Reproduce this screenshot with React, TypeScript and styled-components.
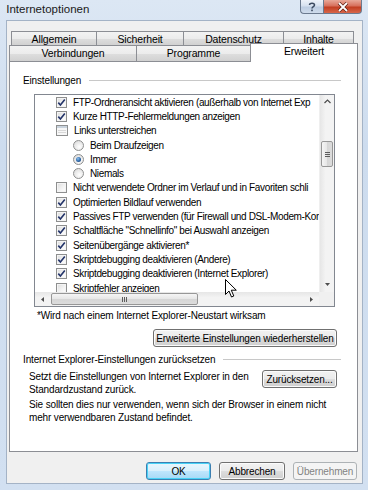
import React from "react";
import styled, { createGlobalStyle, css } from "styled-components";

const GlobalStyle = createGlobalStyle`
  html, body { margin: 0; padding: 0; background: #cfdef0; }
  body {
    font-family: "Liberation Sans", Arial, sans-serif;
    font-size: 10px;
    letter-spacing: -0.15px;
    color: #000;
  }
`;

type Item =
  | { kind: "check"; label: string; checked: boolean }
  | { kind: "group"; label: string }
  | { kind: "radio"; label: string; checked: boolean };

// labels as far as the list box shows them (it is scrolled sideways)
const items: Item[] = [
  { kind: "check", label: "FTP-Ordneransicht aktivieren (außerhalb von Internet Exp", checked: true },
  { kind: "check", label: "Kurze HTTP-Fehlermeldungen anzeigen", checked: true },
  { kind: "group", label: "Links unterstreichen" },
  { kind: "radio", label: "Beim Draufzeigen", checked: false },
  { kind: "radio", label: "Immer", checked: true },
  { kind: "radio", label: "Niemals", checked: false },
  { kind: "check", label: "Nicht verwendete Ordner im Verlauf und in Favoriten schli", checked: false },
  { kind: "check", label: "Optimierten Bildlauf verwenden", checked: true },
  { kind: "check", label: "Passives FTP verwenden (für Firewall und DSL-Modem-Kor", checked: true },
  { kind: "check", label: "Schaltfläche \"Schnellinfo\" bei Auswahl anzeigen", checked: true },
  { kind: "check", label: "Seitenübergänge aktivieren*", checked: true },
  { kind: "check", label: "Skriptdebugging deaktivieren (Andere)", checked: true },
  { kind: "check", label: "Skriptdebugging deaktivieren (Internet Explorer)", checked: true },
  { kind: "check", label: "Skriptfehler anzeigen", checked: false },
];

const Window = styled.div`
  position: relative;
  width: 368px;
  height: 490px;
  box-sizing: border-box;
  display: flex;
  flex-direction: column;
  padding: 0 5px 6px 6px;
  background: linear-gradient(180deg, #dce7f4 0%, #cddcee 30%, #d2e0f1 100%);
  overflow: hidden;
`;

const TitleBar = styled.div`
  height: 20px;
  display: flex;
  align-items: flex-start;
  margin-left: -3px;
`;

const Title = styled.div`
  font-size: 11.5px;
  letter-spacing: 0;
  color: #1a1a1a;
  line-height: 18px;
  flex: 1;
`;

const Caption = styled.div`
  display: flex;
  margin-right: 1px;
`;

const CaptionButton = styled.div<{ $close?: boolean }>`
  height: 14px;
  box-sizing: border-box;
  display: flex;
  align-items: center;
  justify-content: center;
  border: 1px solid #6b7a8f;
  border-top: none;
  ${(p) =>
    p.$close
      ? css`
          width: 39px;
          border-radius: 0 0 4px 0;
          background: linear-gradient(180deg, #e8a899 0%, #d7705c 45%, #c23e22 55%, #d8664a 100%);
        `
      : css`
          width: 23px;
          border-right: none;
          border-radius: 0 0 0 4px;
          background: linear-gradient(180deg, #edf2f9 0%, #d6e1ef 45%, #bdcde2 55%, #cfdcec 100%);
        `}
`;

const Body = styled.div`
  flex: 1;
  display: flex;
  flex-direction: column;
  background: #f0f0f0;
  border: 1px solid #a4b3c6;
  padding: 10px 4px 0 2px;
`;

const TabStrip = styled.div`
  display: flex;
  flex-direction: column;
`;

const TabRow = styled.div<{ $indent: number }>`
  display: flex;
  align-items: flex-start;
  padding-left: ${(p) => p.$indent}px;
  margin-bottom: -1px;
`;

const Tab = styled.div<{ $w: number; $h: number; $selected?: boolean }>`
  width: ${(p) => p.$w}px;
  height: ${(p) => p.$h}px;
  box-sizing: border-box;
  border: 1px solid #8c8e94;
  border-bottom: none;
  margin-right: -1px;
  text-align: center;
  font-size: 10.5px;
  line-height: 14px;
  background: linear-gradient(180deg, #f3f3f3 0%, #ebebeb 50%, #dddddd 51%, #cfcfcf 100%);
  ${(p) =>
    p.$selected &&
    css`
      position: relative;
      z-index: 1;
      margin-top: -2px;
      margin-right: 0;
      line-height: 15px;
      background: #fff;
    `}
`;

const TabPanel = styled.div`
  height: 391px;
  box-sizing: border-box;
  background: #fff;
  border: 1px solid #8c8e94;
  padding: 12px 16px 0 13px;
  display: flex;
  flex-direction: column;
`;

const GroupHeader = styled.div`
  display: flex;
  align-items: center;
  gap: 8px;
  line-height: 14px;
  &::after {
    content: "";
    flex: 1;
    height: 1px;
    background: #c8c8c8;
    border-bottom: 1px solid #fff;
  }
`;

const ListBox = styled.div`
  margin: 6px 6px 0 11px;
  height: 213px;
  box-sizing: border-box;
  border: 1px solid #828790;
  display: grid;
  grid-template-columns: 1fr 15px;
  grid-template-rows: 1fr 14px;
`;

const ListItems = styled.div`
  overflow: hidden;
  padding-left: 21px;
  letter-spacing: -0.36px;
`;

const Row = styled.div<{ $indent?: boolean }>`
  height: 14.3px;
  display: flex;
  align-items: center;
  gap: 6px;
  white-space: nowrap;
  padding-left: ${(p) => (p.$indent ? 17 : 0)}px;
`;

const Box = styled.span`
  width: 11px;
  height: 11px;
  flex: none;
  box-sizing: border-box;
  border: 1px solid #8e8f8f;
  background: linear-gradient(135deg, #dcdcdc 0%, #f4f4f4 60%, #ffffff 100%);
  box-shadow: inset 0 0 0 1px #f4f4f4;
  display: flex;
  align-items: center;
  justify-content: center;
`;

const Radio = styled.span<{ $on: boolean }>`
  width: 11px;
  height: 11px;
  flex: none;
  box-sizing: border-box;
  border-radius: 50%;
  border: 1px solid #8e8f8f;
  background: radial-gradient(circle at 60% 65%, #ffffff 0%, #e2e2e2 70%, #cfcfcf 100%);
  display: flex;
  align-items: center;
  justify-content: center;
  &::after {
    content: "";
    display: ${(p) => (p.$on ? "block" : "none")};
    width: 5px;
    height: 5px;
    border-radius: 50%;
    background: radial-gradient(circle at 40% 35%, #8fc2ef 0%, #2b66a8 55%, #0d2f5e 100%);
  }
`;

const VScroll = styled.div`
  display: flex;
  flex-direction: column;
  background: linear-gradient(90deg, #e6e6e6 0%, #f3f3f3 40%, #f3f3f3 100%);
  border-left: 1px solid #efefef;
`;

const HScroll = styled.div`
  display: flex;
  align-items: stretch;
  background: linear-gradient(180deg, #e6e6e6 0%, #f3f3f3 40%, #f3f3f3 100%);
`;

const Corner = styled.div`
  background: #f0f0f0;
`;

const Arrow = styled.div<{ $size: number }>`
  flex: none;
  width: ${(p) => p.$size}px;
  height: ${(p) => p.$size}px;
  display: flex;
  align-items: center;
  justify-content: center;
`;

const Track = styled.div`
  flex: 1;
  display: flex;
  flex-direction: column;
`;

const HTrack = styled.div`
  flex: 1;
  display: flex;
  padding: 1px 0;
`;

const Thumb = styled.div<{ $vertical?: boolean }>`
  box-sizing: border-box;
  border: 1px solid #979797;
  border-radius: 2px;
  display: flex;
  align-items: center;
  justify-content: center;
  ${(p) =>
    p.$vertical
      ? css`
          margin: 31px 1px 0 1px;
          height: 26px;
          background: linear-gradient(90deg, #f5f5f5 0%, #e6e6e6 50%, #d6d6d6 51%, #dcdcdc 100%);
        `
      : css`
          margin-left: 1px;
          width: 147px;
          background: linear-gradient(180deg, #f5f5f5 0%, #e6e6e6 50%, #d6d6d6 51%, #dcdcdc 100%);
        `}
`;

const Note = styled.div`
  margin: 2px 0 0 14px;
  line-height: 14px;
`;

const PushButton = styled.div<{ $w: number; $default?: boolean; $disabled?: boolean }>`
  width: ${(p) => p.$w}px;
  height: 18px;
  box-sizing: border-box;
  border: 1px solid #707070;
  border-radius: 3px;
  display: flex;
  align-items: center;
  justify-content: center;
  background: linear-gradient(180deg, #f2f2f2 0%, #ebebeb 48%, #dddddd 52%, #cfcfcf 100%);
  box-shadow: inset 0 0 0 1px #fbfbfb;
  white-space: nowrap;
  ${(p) =>
    p.$default &&
    css`
      border-color: #3c7fb1;
      box-shadow: inset 0 0 0 1px #48d2f6;
      background: linear-gradient(180deg, #eaf6fd 0%, #d9f0fc 48%, #bee6fd 52%, #a7d9f5 100%);
    `}
  ${(p) =>
    p.$disabled &&
    css`
      border-color: #adb2b5;
      background: #f4f4f4;
      box-shadow: none;
      color: #838383;
    `}
`;

const RightAligned = styled.div<{ $top: number }>`
  display: flex;
  justify-content: flex-end;
  margin: ${(p) => p.$top}px 4px 0 0;
`;

const SectionHeader = styled(GroupHeader)`
  margin-top: 6px;
`;

const ResetRow = styled.div`
  display: flex;
  justify-content: space-between;
  align-items: flex-start;
  margin: 3px 4px 0 6px;
`;

const Para = styled.div<{ $top?: number }>`
  line-height: 12.5px;
  margin-top: ${(p) => p.$top ?? 0}px;
`;

const ParaBlock = styled.div`
  line-height: 13px;
  margin: 2px 0 0 6px;
`;

const Footer = styled.div`
  display: flex;
  justify-content: flex-end;
  gap: 8px;
  padding: 10px 1px 0 0;
`;

const Cursor = styled.svg`
  position: absolute;
  left: 225px;
  top: 279px;
`;

function Check() {
  return (
    <svg width="9" height="9" viewBox="0 0 9 9">
      <path d="M1.3 4.6 L3.4 7 L7.8 1.4" fill="none" stroke="#23346a" strokeWidth="1.6" />
    </svg>
  );
}

function GroupIcon() {
  return (
    <svg width="12" height="11" viewBox="0 0 12 11" style={{ flex: "none" }}>
      <rect x="0.5" y="0.5" width="11" height="10" fill="#f7f7f7" stroke="#8e8f8f" />
      <rect x="1" y="1" width="10" height="2" fill="#c9d3dd" />
      <line x1="2" y1="5.5" x2="10" y2="5.5" stroke="#d8d8d8" />
      <line x1="2" y1="7.5" x2="10" y2="7.5" stroke="#d8d8d8" />
    </svg>
  );
}

function Tri({ dir }: { dir: "up" | "down" | "left" | "right" }) {
  const d = {
    up: "M1.5 5 L4.5 2 L7.5 5",
    down: "M2 3 L7 3 L4.5 6 Z",
    left: "M6 2 L6 7 L3 4.5 Z",
    right: "M3 2 L3 7 L6 4.5 Z",
  }[dir];
  return (
    <svg width="9" height="9" viewBox="0 0 9 9">
      {dir === "up" ? (
        <path d={d} fill="none" stroke="#4d4d4d" strokeWidth="1.2" />
      ) : (
        <path d={d} fill="#4d4d4d" />
      )}
    </svg>
  );
}

function Grip({ vertical }: { vertical?: boolean }) {
  return vertical ? (
    <svg width="7" height="7" viewBox="0 0 7 7">
      <path d="M1 1.5h5M1 3.5h5M1 5.5h5" stroke="#5d5d5d" />
    </svg>
  ) : (
    <svg width="7" height="7" viewBox="0 0 7 7">
      <path d="M1.5 1v5M3.5 1v5M5.5 1v5" stroke="#5d5d5d" />
    </svg>
  );
}

export default function App() {
  return (
    <>
      <GlobalStyle />
      <Window>
        <TitleBar>
          <Title>&nbsp;Internetoptionen</Title>
          <Caption>
            <CaptionButton>
              <svg width="8" height="10" viewBox="0 0 8 10">
                <path d="M1.5 3 C1.5 0.6 6.5 0.6 6.5 3 C6.5 4.6 4 4.6 4 6.5" fill="none" stroke="#3b4a60" strokeWidth="1.5" />
                <rect x="3.2" y="7.6" width="1.6" height="1.6" fill="#3b4a60" />
              </svg>
            </CaptionButton>
            <CaptionButton $close>
              <svg width="12" height="10" viewBox="0 0 12 10">
                <path d="M2 1 L10 9 M10 1 L2 9" stroke="#5a1b10" strokeWidth="3.2" />
                <path d="M2 1 L10 9 M10 1 L2 9" stroke="#fff" strokeWidth="1.8" />
              </svg>
            </CaptionButton>
          </Caption>
        </TitleBar>
        <Body>
          <TabStrip>
            <TabRow $indent={2}>
              <Tab $w={86} $h={15}>Allgemein</Tab>
              <Tab $w={88} $h={15}>Sicherheit</Tab>
              <Tab $w={101} $h={15}>Datenschutz</Tab>
              <Tab $w={71} $h={15}>Inhalte</Tab>
            </TabRow>
            <TabRow $indent={0}>
              <Tab $w={128} $h={17}>Verbindungen</Tab>
              <Tab $w={115} $h={17}>Programme</Tab>
              <Tab $w={108} $h={19} $selected>
                Erweitert
              </Tab>
            </TabRow>
          </TabStrip>
          <TabPanel>
            <GroupHeader>Einstellungen</GroupHeader>
            <ListBox>
              <ListItems>
                {items.map((it, i) =>
                  it.kind === "check" ? (
                    <Row key={i}>
                      <Box>{it.checked && <Check />}</Box>
                      {it.label}
                    </Row>
                  ) : it.kind === "radio" ? (
                    <Row key={i} $indent>
                      <Radio $on={it.checked} />
                      {it.label}
                    </Row>
                  ) : (
                    <Row key={i}>
                      <GroupIcon />
                      {it.label}
                    </Row>
                  )
                )}
              </ListItems>
              <VScroll>
                <Arrow $size={15}>
                  <Tri dir="up" />
                </Arrow>
                <Track>
                  <Thumb $vertical>
                    <Grip vertical />
                  </Thumb>
                </Track>
                <Arrow $size={15}>
                  <Tri dir="down" />
                </Arrow>
              </VScroll>
              <HScroll>
                <Arrow $size={15}>
                  <Tri dir="left" />
                </Arrow>
                <HTrack>
                  <Thumb>
                    <Grip />
                  </Thumb>
                </HTrack>
                <Arrow $size={15}>
                  <Tri dir="right" />
                </Arrow>
              </HScroll>
              <Corner />
            </ListBox>
            <Note>*Wird nach einem Internet Explorer-Neustart wirksam</Note>
            <RightAligned $top={6}>
              <PushButton $w={184}>Erweiterte Einstellungen wiederherstellen</PushButton>
            </RightAligned>
            <SectionHeader>Internet Explorer-Einstellungen zurücksetzen</SectionHeader>
            <ResetRow>
              <Para $top={1}>
                Setzt die Einstellungen von Internet Explorer in den
                <br />
                Standardzustand zurück.
              </Para>
              <PushButton $w={75}>Zurücksetzen...</PushButton>
            </ResetRow>
            <ParaBlock>
              Sie sollten dies nur verwenden, wenn sich der Browser in einem nicht
              <br />
              mehr verwendbaren Zustand befindet.
            </ParaBlock>
          </TabPanel>
          <Footer>
            <PushButton $w={65} $default>
              OK
            </PushButton>
            <PushButton $w={66}>Abbrechen</PushButton>
            <PushButton $w={64} $disabled>
              Übernehmen
            </PushButton>
          </Footer>
        </Body>
        <Cursor width="13" height="19" viewBox="0 0 13 19">
          <path d="M0.5 0.5 L0.5 15.5 L4 12 L6.5 18 L8.8 17 L6.3 11.2 L11.3 11.2 Z" fill="#fff" stroke="#000" strokeWidth="1" strokeLinejoin="round" />
        </Cursor>
      </Window>
    </>
  );
}
